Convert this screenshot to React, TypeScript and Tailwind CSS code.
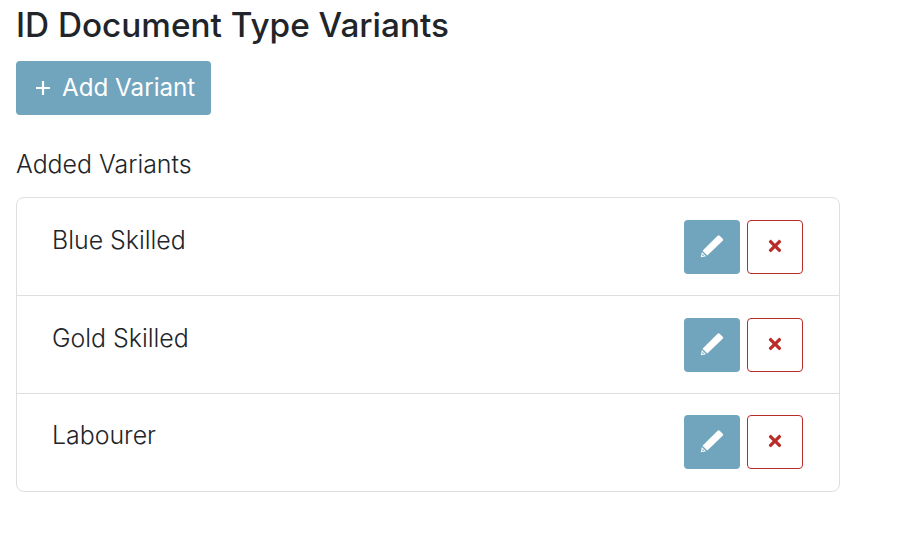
import { FaTimes } from "react-icons/fa";

const variants = ["Blue Skilled", "Gold Skilled", "Labourer"];

function VariantRow({ name, last }: { name: string; last: boolean }) {
  return (
    <li
      className={`flex items-start justify-between pl-[35px] pr-9 ${
        last ? "h-[97px] pt-[21px]" : "h-[98px] border-b border-[#dfdfdf] pt-[22px]"
      }`}
    >
      <span className="mt-[2px] text-[24.9px] leading-9 font-light">{name}</span>
      <div className="flex gap-[7px]">
        <button className="flex h-[54px] w-14 items-center justify-center rounded bg-[#71a4bd] text-white">
          <svg width="24" height="24" viewBox="0 0 24 24" fill="currentColor">
            <path d="M2.5 15.8 17.6 .7a1.5 1.5 0 0 1 2.1 0l3 3a1.5 1.5 0 0 1 0 2.1L7.3 20.5z" />
            <path d="M1.9 17.1 6 21.2.8 22.3z" />
            <path d="M2.6 18.9 4.3 20.6 2.2 21.1z" fill="#71a4bd" />
          </svg>
        </button>
        <button className="flex h-[54px] w-14 items-center justify-center rounded border border-[#b92c28] bg-white text-[#b92c28]">
          <FaTimes className="h-[18px] w-[18px] -translate-y-px" />
        </button>
      </div>
    </li>
  );
}

export default function App() {
  return (
    <div className="min-h-[544px] bg-white px-4 font-['Inter',sans-serif] text-[#212529]">
      <h1 className="text-[33.3px] leading-[51px] font-medium">ID Document Type Variants</h1>
      <button className="mt-[10px] flex h-[54px] w-[195px] items-center rounded bg-[#71a4bd] pl-[19px] text-[24.2px] font-normal text-white">
        <svg width="16" height="16" viewBox="0 0 16 16" fill="none" stroke="currentColor" strokeWidth="2.2">
          <path d="M8 1v14M1 8h14" />
        </svg>
        <span className="ml-[11px]">Add Variant</span>
      </button>
      <h2 className="mt-[31px] text-[24.9px] leading-9 font-light">Added Variants</h2>
      <ul className="mt-[15px] w-[824px] rounded-lg border border-[#dfdfdf]">
        {variants.map((v, i) => (
          <VariantRow key={v} name={v} last={i === variants.length - 1} />
        ))}
      </ul>
    </div>
  );
}
